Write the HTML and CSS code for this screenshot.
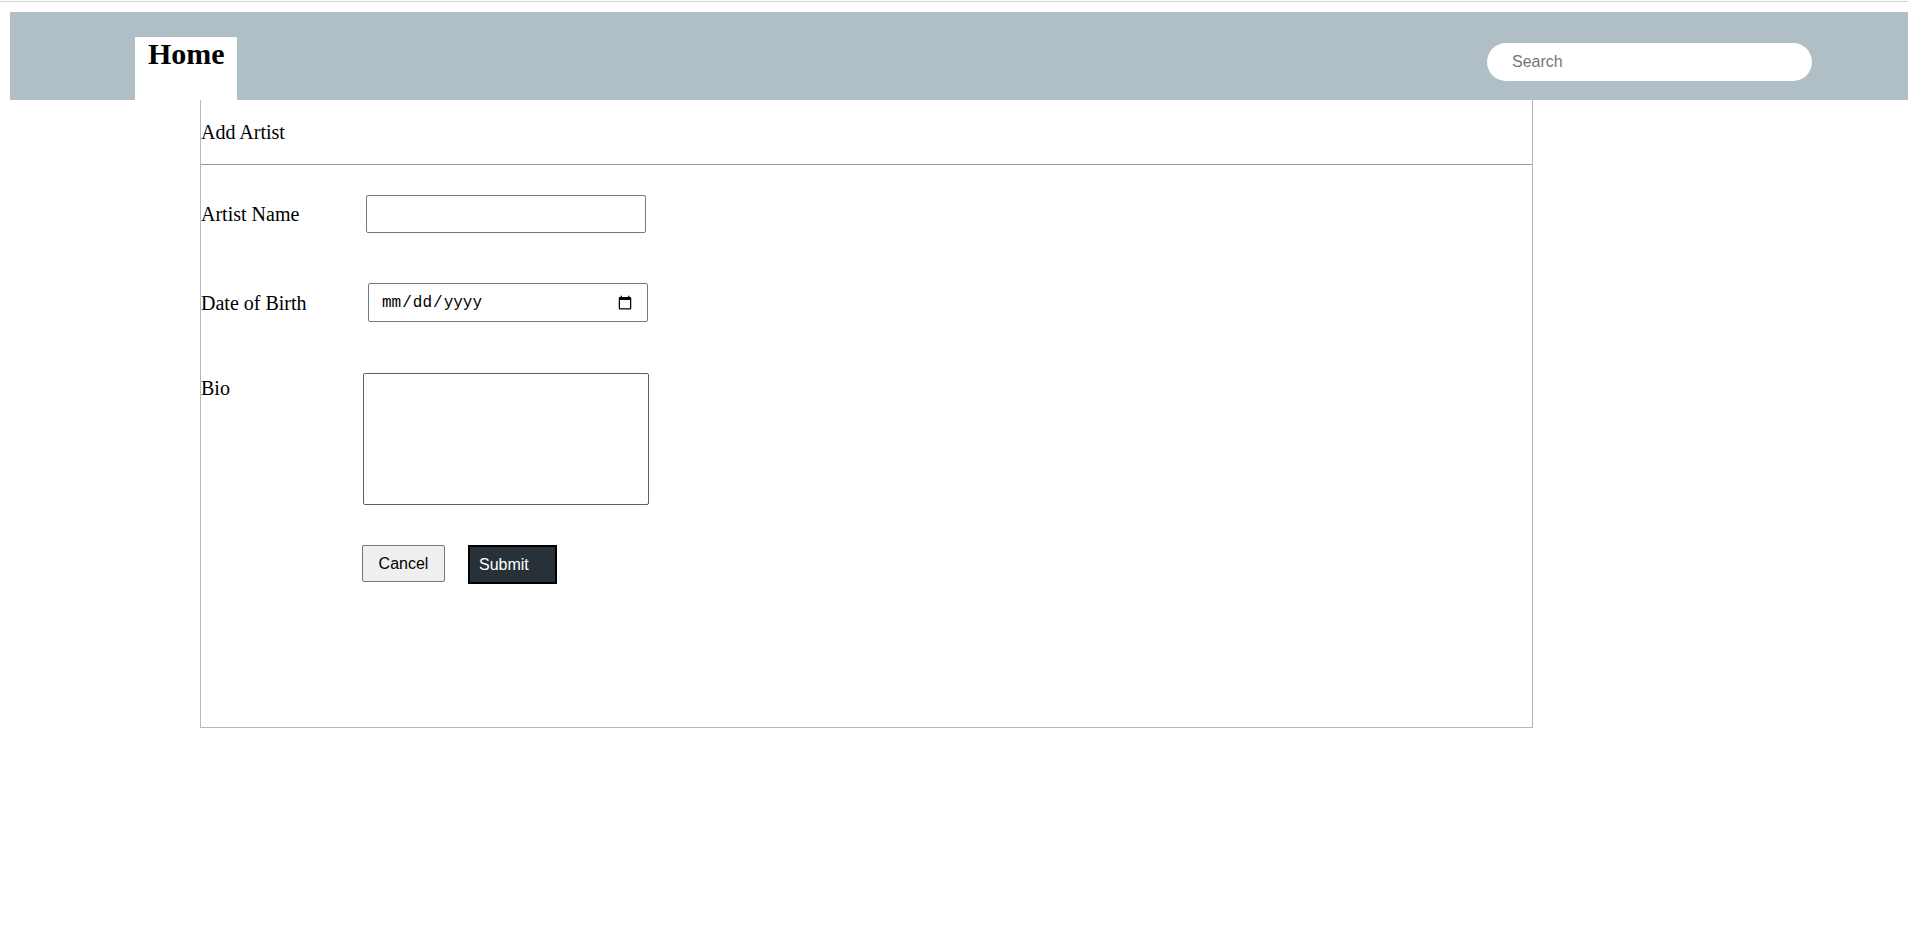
FILE: index.html
```html
<!DOCTYPE html>
<html lang="en">
<head>
    <meta charset="UTF-8">
    <meta name="viewport" content="width=device-width, initial-scale=1.0">
    <title>Add Artist</title>
    <link rel="stylesheet" href="styles.css">
</head>
<body>
    <div class="top_line"></div>
    <nav class="navbar">
        <a class="home_link" href="#">Home</a>
        <input class="search" type="text" placeholder="Search">
    </nav>

    <div class="artist_card">
        <div class="card_head">Add Artist</div>
        <form class="artist_form">
            <div class="form_row">
                <label for="name">Artist Name</label>
                <input id="name" class="text_field" type="text">
            </div>
            <div class="form_row">
                <label for="dob">Date of Birth</label>
                <input id="dob" class="date_field" type="date">
            </div>
            <div class="form_row bio_row">
                <label for="bio">Bio</label>
                <textarea id="bio" class="bio_field"></textarea>
            </div>
            <div class="form_btns">
                <button type="button" class="cancelBtn">Cancel</button>
                <button type="submit" class="submitBtn">Submit</button>
            </div>
        </form>
    </div>
</body>
</html>
```

FILE: styles.css
```css
body {
    margin: 0;
    font-family: "Liberation Serif", "Times New Roman", serif;
    background: #fff;
    color: #000;
}

.top_line {
    height: 1px;
    margin-top: 1px;
    background: #d3d3d3;
}

.navbar {
    margin: 10px 0 0 10px;
    height: 88px;
    background: #b0bec5;
    display: flex;
    justify-content: space-between;
    align-items: flex-start;
    padding: 0 96px 0 125px;
}

.home_link {
    margin-top: 25px;
    width: 89px;
    height: 63px;
    padding-left: 13px;
    background: #fff;
    color: #000;
    font-size: 30px;
    font-weight: bold;
    line-height: 33px;
    text-decoration: none;
}

.search {
    margin-top: 31px;
    width: 325px;
    height: 38px;
    box-sizing: border-box;
    border: none;
    border-radius: 19px;
    padding: 0 25px;
    font-family: "Liberation Sans", Arial, sans-serif;
    font-size: 16px;
    outline: none;
}

.search::placeholder {
    color: #757575;
}

.artist_card {
    margin-left: 200px;
    width: 1331px;
    border: 1px solid #a9bcc6;
    border-top: none;
    padding-bottom: 143px;
}

.card_head {
    font-size: 20px;
    line-height: 22px;
    padding: 21px 0 21px;
    border-bottom: 1px solid #999;
}

.artist_form {
    display: flex;
    flex-direction: column;
    padding-top: 30px;
}

.form_row {
    display: flex;
    align-items: center;
    font-size: 20px;
    line-height: 22px;
}

.form_row label {
    width: 165px;
    flex-shrink: 0;
}

.text_field {
    width: 280px;
    height: 38px;
    box-sizing: border-box;
    border: 1px solid #767676;
    border-radius: 2px;
    margin: 0;
}

.date_field {
    margin: 50px 0 0 2px;
    width: 280px;
    height: 39px;
    box-sizing: border-box;
    border: 1px solid #767676;
    border-radius: 2px;
    padding: 0 12px;
    font-family: "Liberation Mono", "Courier New", monospace;
    font-size: 16px;
}

.form_row:nth-child(2) label {
    margin-top: 50px;
}

.bio_row {
    align-items: flex-start;
    margin-top: 51px;
}

.bio_row label {
    margin-top: 4px;
}

.bio_field {
    margin: 0 0 0 -3px;
    width: 286px;
    height: 132px;
    box-sizing: border-box;
    border: 1px solid #5f5f5f;
    border-radius: 2px;
    resize: none;
}

.form_btns {
    display: flex;
    align-items: flex-start;
    gap: 23px;
    margin: 40px 0 0 161px;
}

.form_btns button {
    font-family: "Liberation Sans", Arial, sans-serif;
    font-size: 16px;
    box-sizing: border-box;
    cursor: pointer;
}

.cancelBtn {
    width: 83px;
    height: 37px;
    background: #efefef;
    border: 1px solid #767676;
    border-radius: 2px;
    color: #000;
}

.submitBtn {
    width: 89px;
    height: 39px;
    background: #263238;
    border: 2px solid #000;
    color: #fff;
    text-align: left;
    padding: 0 0 0 9px;
}
```
